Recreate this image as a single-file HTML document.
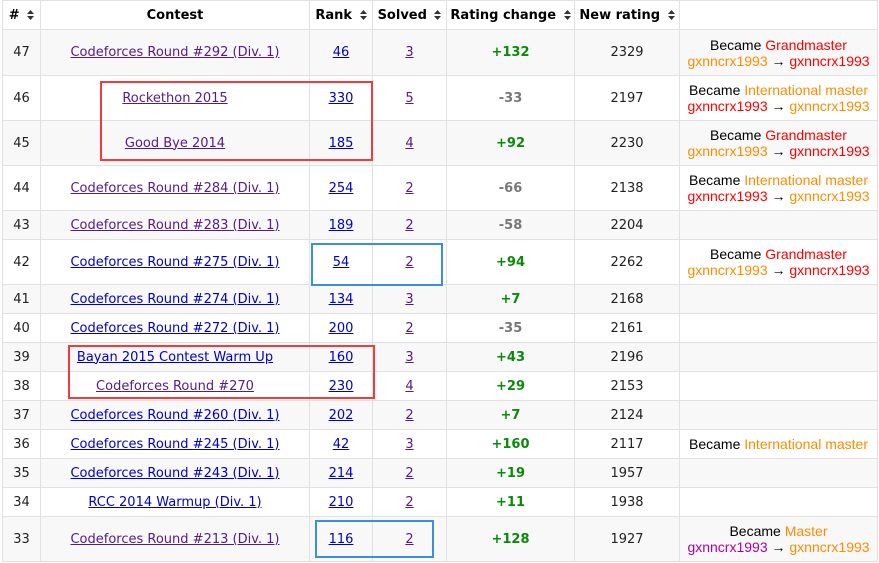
<!DOCTYPE html>
<html><head><meta charset="utf-8"><style>
body{margin:0;background:#fff;width:879px;height:563px;overflow:hidden;position:relative}
table{position:absolute;left:2px;top:0;border-collapse:collapse;table-layout:fixed;font-family:"DejaVu Sans",Verdana,sans-serif;font-size:13px;color:#222}
td,th{border:1px solid #e1e1e1;text-align:center;padding:0;white-space:nowrap;overflow:hidden}
th{font-weight:bold;font-size:13px;color:#000;background:#fff}
tr.g td{background:#f8f8f8}
a{text-decoration:underline}
.v{color:#551a8b}.b{color:#0000cc}
.p{color:#0a8a0a;font-weight:bold}.n{color:#777;font-weight:bold}
td.l{font-family:"Liberation Sans",Arial,sans-serif;font-size:14px;line-height:16px;color:#000}
.r{color:#ff0000}.o{color:#ff8c00}.m{color:#a0a}
.s{display:inline-block;vertical-align:middle;margin-left:3px}
.box{position:absolute;border:2px solid}
</style></head><body>
<table>
<colgroup><col style="width:38px"><col style="width:269px"><col style="width:63px"><col style="width:74px"><col style="width:128px"><col style="width:105px"><col style="width:198px"></colgroup>
<tr style="height:29px"><th># <svg class="s" width="7" height="10"><path d="M0 4L3.5 0L7 4ZM0 6L3.5 10L7 6Z" fill="#333"/></svg></th><th>Contest</th><th>Rank <svg class="s" width="7" height="10"><path d="M0 4L3.5 0L7 4ZM0 6L3.5 10L7 6Z" fill="#333"/></svg></th><th>Solved <svg class="s" width="7" height="10"><path d="M0 4L3.5 0L7 4ZM0 6L3.5 10L7 6Z" fill="#333"/></svg></th><th>Rating change <svg class="s" width="7" height="10"><path d="M0 4L3.5 0L7 4ZM0 6L3.5 10L7 6Z" fill="#333"/></svg></th><th>New rating <svg class="s" width="7" height="10"><path d="M0 4L3.5 0L7 4ZM0 6L3.5 10L7 6Z" fill="#333"/></svg></th><th></th></tr>
<tr class="g" style="height:46px"><td>47</td><td><a class="v">Codeforces Round #292 (Div. 1)</a></td><td><a class="b">46</a></td><td><a class="v">3</a></td><td class="p">+132</td><td>2329</td><td class="l">Became <span class="r">Grandmaster</span><br><span class="o">gxnncrx1993</span> → <span class="r">gxnncrx1993</span></td></tr>
<tr style="height:45px"><td>46</td><td><a class="v">Rockethon 2015</a></td><td><a class="b">330</a></td><td><a class="v">5</a></td><td class="n">-33</td><td>2197</td><td class="l">Became <span class="o">International master</span><br><span class="r">gxnncrx1993</span> → <span class="o">gxnncrx1993</span></td></tr>
<tr class="g" style="height:45px"><td>45</td><td><a class="v">Good Bye 2014</a></td><td><a class="b">185</a></td><td><a class="v">4</a></td><td class="p">+92</td><td>2230</td><td class="l">Became <span class="r">Grandmaster</span><br><span class="o">gxnncrx1993</span> → <span class="r">gxnncrx1993</span></td></tr>
<tr style="height:45px"><td>44</td><td><a class="v">Codeforces Round #284 (Div. 1)</a></td><td><a class="b">254</a></td><td><a class="v">2</a></td><td class="n">-66</td><td>2138</td><td class="l">Became <span class="o">International master</span><br><span class="r">gxnncrx1993</span> → <span class="o">gxnncrx1993</span></td></tr>
<tr class="g" style="height:29px"><td>43</td><td><a class="v">Codeforces Round #283 (Div. 1)</a></td><td><a class="b">189</a></td><td><a class="v">2</a></td><td class="n">-58</td><td>2204</td><td class="l"></td></tr>
<tr style="height:45px"><td>42</td><td><a class="b">Codeforces Round #275 (Div. 1)</a></td><td><a class="b">54</a></td><td><a class="v">2</a></td><td class="p">+94</td><td>2262</td><td class="l">Became <span class="r">Grandmaster</span><br><span class="o">gxnncrx1993</span> → <span class="r">gxnncrx1993</span></td></tr>
<tr class="g" style="height:29px"><td>41</td><td><a class="b">Codeforces Round #274 (Div. 1)</a></td><td><a class="b">134</a></td><td><a class="v">3</a></td><td class="p">+7</td><td>2168</td><td class="l"></td></tr>
<tr style="height:29px"><td>40</td><td><a class="b">Codeforces Round #272 (Div. 1)</a></td><td><a class="b">200</a></td><td><a class="v">2</a></td><td class="n">-35</td><td>2161</td><td class="l"></td></tr>
<tr class="g" style="height:29px"><td>39</td><td><a class="b">Bayan 2015 Contest Warm Up</a></td><td><a class="b">160</a></td><td><a class="v">3</a></td><td class="p">+43</td><td>2196</td><td class="l"></td></tr>
<tr style="height:29px"><td>38</td><td><a class="v">Codeforces Round #270</a></td><td><a class="b">230</a></td><td><a class="v">4</a></td><td class="p">+29</td><td>2153</td><td class="l"></td></tr>
<tr class="g" style="height:29px"><td>37</td><td><a class="b">Codeforces Round #260 (Div. 1)</a></td><td><a class="b">202</a></td><td><a class="v">2</a></td><td class="p">+7</td><td>2124</td><td class="l"></td></tr>
<tr style="height:29px"><td>36</td><td><a class="b">Codeforces Round #245 (Div. 1)</a></td><td><a class="b">42</a></td><td><a class="v">3</a></td><td class="p">+160</td><td>2117</td><td class="l">Became <span class="o">International master</span></td></tr>
<tr class="g" style="height:29px"><td>35</td><td><a class="b">Codeforces Round #243 (Div. 1)</a></td><td><a class="b">214</a></td><td><a class="v">2</a></td><td class="p">+19</td><td>1957</td><td class="l"></td></tr>
<tr style="height:29px"><td>34</td><td><a class="b">RCC 2014 Warmup (Div. 1)</a></td><td><a class="b">210</a></td><td><a class="v">2</a></td><td class="p">+11</td><td>1938</td><td class="l"></td></tr>
<tr class="g" style="height:45px"><td>33</td><td><a class="v">Codeforces Round #213 (Div. 1)</a></td><td><a class="b">116</a></td><td><a class="v">2</a></td><td class="p">+128</td><td>1927</td><td class="l">Became <span class="o">Master</span><br><span class="m">gxnncrx1993</span> → <span class="o">gxnncrx1993</span></td></tr>
</table>
<div class="box" style="left:100px;top:81px;width:269px;height:76px;border-color:#f03c3c"></div>
<div class="box" style="left:68px;top:345px;width:303px;height:50px;border-color:#f03c3c"></div>
<div class="box" style="left:311px;top:243px;width:128px;height:39px;border-color:#3a8fe0"></div>
<div class="box" style="left:315px;top:520px;width:115px;height:34px;border-color:#3a8fe0"></div>
</body></html>
